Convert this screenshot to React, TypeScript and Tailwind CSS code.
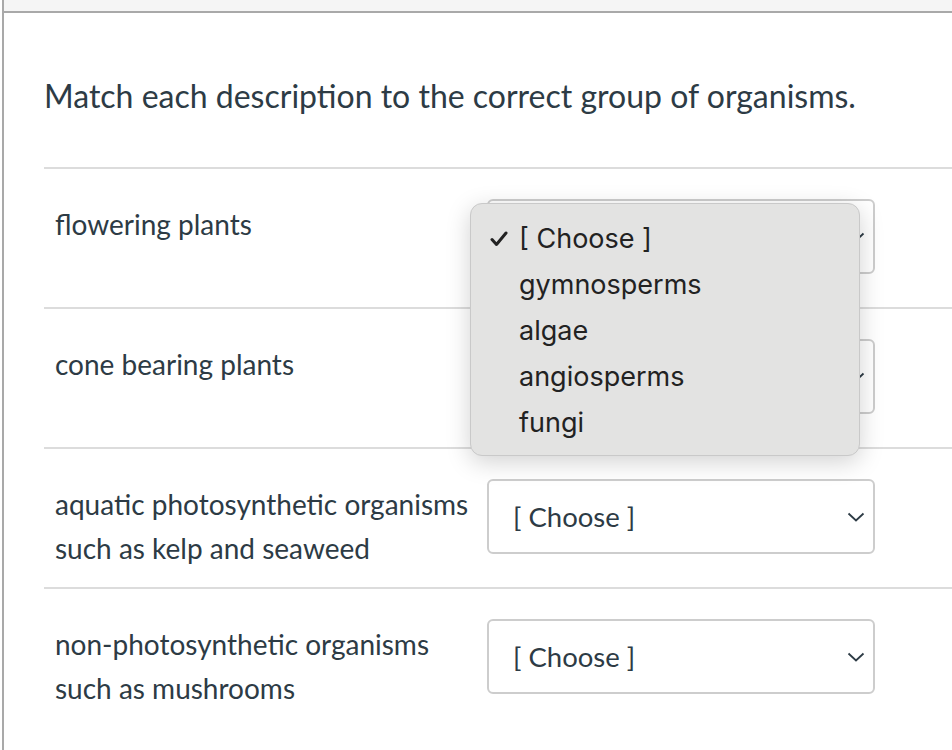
const ROWS = [
  { label: ['flowering plants'] },
  { label: ['cone bearing plants'] },
  { label: ['aquatic photosynthetic organisms', 'such as kelp and seaweed'] },
  { label: ['non-photosynthetic organisms', 'such as mushrooms'] },
]

const OPTIONS = ['[ Choose ]', 'gymnosperms', 'algae', 'angiosperms', 'fungi']

function Chevron() {
  return (
    <svg width="18" height="10" viewBox="0 0 18 10" fill="none" className="shrink-0">
      <path d="M1.5 1.5 L9 8.5 L16.5 1.5" stroke="#2d3b45" strokeWidth="1.8" />
    </svg>
  )
}

function SelectBox() {
  return (
    <div className="flex h-[75px] w-[388px] shrink-0 items-center justify-between rounded-[6px] border-2 border-[#cdcdcd] bg-white pl-[24px] pr-[8px]">
      <span className="text-[27.5px] text-[#2d3b45]">[ Choose ]</span>
      <Chevron />
    </div>
  )
}

// Menu natif obert sobre el primer desplegable (estil macOS).
function OpenMenu() {
  return (
    <div className="absolute left-[470px] top-[203px] w-[390px] rounded-[12px] border border-[#c9c9c9] bg-[#e3e3e2] pb-[9px] pt-[12px] shadow-[0_6px_24px_rgba(0,0,0,0.18)] [font-family:Inter,'Liberation_Sans',sans-serif]">
      {OPTIONS.map((o, i) => (
        <div key={o} className="flex h-[46px] items-center text-[27px] text-[#222]">
          <span className="flex w-[48px] justify-end pr-[11px]">
            {i === 0 && (
              <svg width="18" height="16" viewBox="0 0 18 16" fill="none">
                <path d="M2 8.5 L6.5 13.5 L16 2" stroke="#222" strokeWidth="3" strokeLinecap="round" strokeLinejoin="round" />
              </svg>
            )}
          </span>
          <span>{o}</span>
        </div>
      ))}
    </div>
  )
}

export default function App() {
  return (
    <div className="relative h-[750px] w-[952px] overflow-hidden bg-white [font-family:Lato,'Liberation_Sans',sans-serif]">
      <div className="ml-[2px] h-full border-l-2 border-[#a9a9a9]">
        <div className="h-[13px] border-b-2 border-[#a9a9a9] bg-[#f5f5f5]" />
        <div className="pl-[40px]">
          <h1 className="pt-[63px] text-[32px] leading-[40px] text-[#2d3b45]">
            Match each description to the correct group of organisms.
          </h1>
          <div className="mt-[51px]">
            {ROWS.map((r, i) => (
              <div key={i} className="flex h-[140px] items-start border-t-2 border-[#dcdcdc]">
                <div className="w-[443px] shrink-0 pl-[11px] pt-[33px] text-[28px] leading-[44px] text-[#2d3b45]">
                  {r.label.map((l) => (
                    <div key={l}>{l}</div>
                  ))}
                </div>
                <div className="pt-[30px]">
                  <SelectBox />
                </div>
              </div>
            ))}
          </div>
        </div>
      </div>
      <OpenMenu />
    </div>
  )
}
